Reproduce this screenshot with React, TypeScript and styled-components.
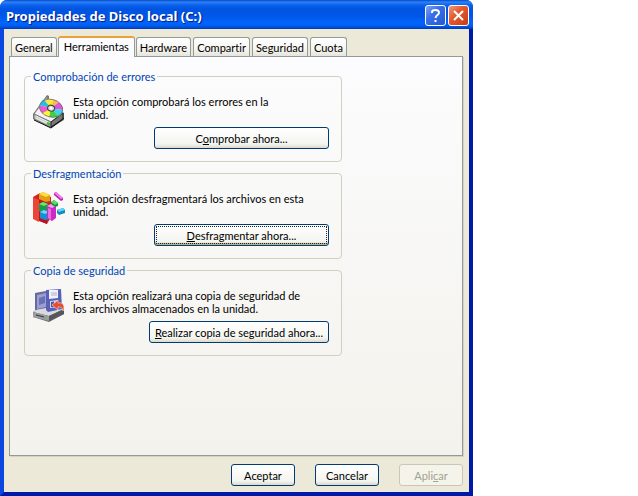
import React from 'react';
import styled, { createGlobalStyle, css } from 'styled-components';

const GlobalStyle = createGlobalStyle`
  * { box-sizing: border-box; }
  body { margin: 0; background: #fff; color: #000; font: 11px/13px Lato, "Liberation Sans", sans-serif; font-variant-ligatures: none; }
  button { font: inherit; font-variant-ligatures: none; color: inherit; white-space: nowrap; }
`;

const Dialog = styled.main`
  display: flex;
  flex-direction: column;
  width: 100%;
  max-width: 473px;
  min-height: 100vh;
  background: #ece9d8;
  border: solid #0831d9;
  border-width: 0 4px 4px;
  border-color: #0831d9 #0019a8 #0019a8 #0a48e0;
  border-radius: 7px 7px 0 0;
`;

const TitleBar = styled.header`
  display: flex;
  align-items: center;
  gap: 2px;
  height: 29px;
  margin: 0 -4px;
  padding: 2px 4px 0 6px;
  border-radius: 7px 7px 0 0;
  background: linear-gradient(#0846c8 0, #2b83f8 2px, #0c62ee 5px, #0054e0 9px, #0056e8 16px, #0066fc 23px, #005cf0 26px, #0038b8 29px);
`;

const Title = styled.h1`
  flex: 1;
  margin: 0;
  color: #fff;
  font: bold 13px/20px "Noto Sans", sans-serif;
  text-shadow: 1px 1px 1px #0a1883;
  white-space: nowrap;
`;

const CaptionButton = styled.button<{ $danger?: boolean }>`
  display: grid;
  place-items: center;
  width: 21px;
  height: 21px;
  padding: 0;
  border: 1px solid #fff;
  border-radius: 3px;
  background: ${p => (p.$danger
    ? 'linear-gradient(135deg, #f0997f, #e35a32 40%, #c83c14)'
    : 'linear-gradient(135deg, #7fa4f5, #3b6fe8 40%, #2258d6)')};
`;

const Body = styled.div`
  display: flex;
  flex: 1;
  flex-direction: column;
  padding: 7px 6px 6px 5px;
`;

const TabList = styled.div`
  display: flex;
  align-items: flex-end;
  gap: 2px;
  height: 21px;
  margin-bottom: -1px;
  padding-left: 2px;
`;

const Tab = styled.button<{ $active?: boolean }>`
  height: 19px;
  padding: 0 3px;
  border: 1px solid #919b9c;
  border-bottom: 0;
  border-radius: 3px 3px 0 0;
  background: linear-gradient(#fff, #f6f5f1 60%, #e6e5dc);
  margin-bottom: 1px;
  ${p => p.$active && css`
    position: relative;
    height: 21px;
    margin: 0 -1px;
    padding: 0 5px 3px;
    border-top: 2px solid #e9a13c;
    background: #fcfcfe;
  `}
`;

const Panel = styled.section`
  display: flex;
  flex: 1;
  flex-direction: column;
  gap: 5px;
  padding: 13px 14px;
  border: 1px solid #919b9c;
  background: linear-gradient(#fcfcfe, #f3f2ec);
  box-shadow: 1px 1px 0 #d6d3c4;
`;

const Group = styled.fieldset`
  display: grid;
  grid-template-columns: 32px 1fr;
  gap: 6px 8px;
  width: 100%;
  max-width: 318px;
  min-width: 0;
  margin: 0;
  padding: 12px 12px 13px 8px;
  border: 1px solid #d0d0bf;
  border-radius: 4px;
`;

const Legend = styled.legend`
  padding: 0 2px;
  margin-left: -2px;
  color: #0046b5;
`;

const IconCell = styled.div`
  grid-row: span 2;
  height: 36px;
  svg { display: block; }
`;

const Description = styled.p`
  margin: 0;
  white-space: pre-line;
`;

const PushButton = styled.button<{ $wide?: boolean; $focused?: boolean }>`
  height: 22px;
  min-width: ${p => (p.$wide ? '175px' : '64px')};
  padding: 0 5px;
  border: 1px solid #003c74;
  border-radius: 3px;
  background: linear-gradient(#fff, #f4f4f0 80%, #dcd8cc);
  &:disabled {
    border-color: #c9c7ba;
    background: #f5f4ea;
    color: #a1a192;
  }
  ${p => p.$focused && css`
    outline: 1px dotted #222;
    outline-offset: -3px;
    box-shadow: inset 0 -2px 0 #b9b586;
  `}
`;

const ButtonSlot = styled.div`
  display: flex;
  justify-content: flex-end;
  height: 21px;
  margin-left: -8px;
`;

const Footer = styled.footer`
  display: flex;
  justify-content: flex-end;
  gap: 20px;
  padding-top: 8px;
`;

const DiskCheckIcon = () => (
  <svg width="32" height="34" viewBox="0 0 32 34" aria-hidden="true">
    <path d="M0 19L14 0l2 1v5l15 12v7L18 33 0 24z" fill="#777" />
    <path d="M1 19L14 2v8l16 8-12 9z" fill="#f3f3f3" stroke="#888" />
    <path d="M1 19l17 8v5L1 24z" fill="#c8c8c8" stroke="#777" />
    <path d="M18 27l12-9v6L18 32z" fill="#777" stroke="#222" />
    <path d="M3 21l12 6M3 23l12 6" stroke="#eee" />
    <path d="M1 25l17 8 13-10" fill="none" stroke="#111" />
    <g transform="translate(-4.600 -2.200) scale(1.180) rotate(14 19 14)">
      <ellipse cx="19" cy="13" rx="10" ry="7.500" fill="#eee" />
      <path d="M19 13H9a10 8 0 0 1 3-6z" fill="#26bde8" />
      <path d="M19 13l-7-5a10 8 0 0 1 7-2.500z" fill="#ffe832" />
      <path d="M19 13V5.500a10 8 0 0 1 5 1z" fill="#f1bd50" />
      <path d="M19 13l5-6.500a10 8 0 0 1 5 5.500z" fill="#e352db" />
      <path d="M19 13l10-1a10 8 0 0 1-2 6z" fill="#37d6ee" />
      <path d="M19 13l8 5a10 8 0 0 1-8 2.500z" fill="#45cf49" />
      <path d="M19 13v7.500a10 8 0 0 1-6-1.500z" fill="#fff32c" />
      <path d="M19 13l-6 6a10 8 0 0 1-4-6z" fill="#ed59cf" />
      <ellipse cx="19" cy="13" rx="10" ry="7.500" fill="none" stroke="#666" strokeWidth=".6" />
      <ellipse cx="19" cy="13" rx="3" ry="2.500" fill="#ddd" stroke="#444" />
      <circle cx="19" cy="13" r="1" fill="#fff" />
    </g>
    <path d="M14 28l3 1.500" stroke="#35bd35" strokeWidth="2" />
  </svg>
);

const DefragIcon = () => (
  <svg width="34" height="34" viewBox="0 0 34 34" aria-hidden="true">
    <path d="M0 5l7-4 11 4v20l-4 7L0 26z" fill="#c92626" />
    <path d="M0 5l6 3v22l-6-3z" fill="#ee4337" />
    <path d="M6 8l8 3v21l-8-3z" fill="#b81424" />
    <path d="M6 2l4-2 7 3v6l-4 1-7-3z" fill="#e79c12" />
    <path d="M6 2l4-2 7 3-4 2z" fill="#ffde45" />
    <path d="M6 12l4-2 5 2v8l-4 2-5-3z" fill="#179b4d" />
    <path d="M6 12l4-2 5 2-4 2z" fill="#78e368" />
    <path d="M7 20l4-2 5 2v7l-4 1-5-2z" fill="#1690d5" />
    <path d="M7 20l4-2 5 2-4 2z" fill="#66d5ff" />
    <path d="M14 14l4-2 5 2v12l-4 3-5-3z" fill="#cc2ac5" />
    <path d="M14 14l4-2 5 2-4 2z" fill="#ff9ef3" />
    <path d="M18 17v11l-3-2V16z" fill="#ed6bdf" />
    <path d="M21 1l2-1 7 6v2l-2 1-7-6z" fill="#b62bae" />
    <path d="M21 1l2-1 7 6-2 1z" fill="#ff79ed" />
    <path d="M18 10l3-2 4 3v3l-3 1-4-3z" fill="#14963b" />
    <path d="M18 10l3-2 4 3-3 2z" fill="#61dc66" />
    <path d="M24 18l6-2 2 2v3l-6 2-2-2z" fill="#1689be" />
    <path d="M24 18l6-2 2 2-6 2z" fill="#5ed8ef" />
  </svg>
);

const BackupIcon = () => (
  <svg width="32" height="34" viewBox="0 0 32 34" aria-hidden="true">
    <path d="M0 23l6-5 25 1v6l-15 8L0 28z" fill="#666" />
    <path d="M0 23l7-5 24 2-15 7z" fill="#d9d9df" />
    <path d="M0 23l16 4v5L0 28z" fill="#999ba1" />
    <path d="M16 27l15-7v5l-15 7z" fill="#55575c" />
    <path d="M2 4l11-2v17L2 21z" fill="#666a98" />
    <path d="M4 6l9-2v14l-9 2z" fill="#9a9ed0" />
    <path d="M6 9l6-2v7l-6 2z" fill="#6a70b4" />
    <path d="M13 1l15-1 1 20-14 3-2-2z" fill="#5960b7" />
    <path d="M16 1h9v8l-9 1z" fill="#f2f2ff" />
    <path d="M17 12l8-1v7l-8 1z" fill="#ced2eb" />
    <path d="M18 13l3-.5V18h-3z" fill="#4f579b" />
    <path d="M18 4h6M18 6h6" stroke="#aaaed6" />
    <path d="M19 16l6-5v3c6-1 7 4 5 8-1-4-2-4-5-4v3z" fill="#e94a27" stroke="#fff" strokeWidth=".5" />
    <path d="M3 26l8 2" stroke="#333" />
    <path d="M13 29h2" stroke="#6fc96c" />
  </svg>
);

const tabs = ['General', 'Herramientas', 'Hardware', 'Compartir', 'Seguridad', 'Cuota'];

interface ToolProps {
  title: string;
  icon: React.ReactNode;
  text: string;
  focused?: boolean;
  children: React.ReactNode;
}

const Tool = ({ title, icon, text, focused, children }: ToolProps) => (
  <Group>
    <Legend>{title}</Legend>
    <IconCell>{icon}</IconCell>
    <Description>{text}</Description>
    <ButtonSlot>
      <PushButton type="button" $wide $focused={focused}>{children}</PushButton>
    </ButtonSlot>
  </Group>
);

export default function App() {
  return (
    <>
      <GlobalStyle />
      <Dialog aria-labelledby="dialog-title">
        <TitleBar>
          <Title id="dialog-title">Propiedades de Disco local (C:)</Title>
          <CaptionButton type="button" aria-label="Ayuda">
            <svg width="13" height="15" viewBox="0 0 13 15" fill="none" stroke="#fff" strokeWidth="2">
              <path d="M3 5V4q0-2 3.500-2T10 4.500Q10 6 8.500 7T6.500 10M6.500 12v2" />
            </svg>
          </CaptionButton>
          <CaptionButton type="button" aria-label="Cerrar" $danger>
            <svg width="13" height="13" viewBox="0 0 13 13" stroke="#fff" strokeWidth="2">
              <path d="M2 2l9 9M11 2l-9 9" />
            </svg>
          </CaptionButton>
        </TitleBar>
        <Body>
          <TabList role="tablist">
            {tabs.map(name => (
              <Tab key={name} type="button" role="tab" aria-selected={name === 'Herramientas'} $active={name === 'Herramientas'}>
                {name}
              </Tab>
            ))}
          </TabList>
          <Panel role="tabpanel" aria-label="Herramientas">
            <Tool title="Comprobación de errores" icon={<DiskCheckIcon />} text={'Esta opción comprobará los errores en la\nunidad.'}>
              C<u>o</u>mprobar ahora...
            </Tool>
            <Tool title="Desfragmentación" icon={<DefragIcon />} focused text={'Esta opción desfragmentará los archivos en esta\nunidad.'}>
              <u>D</u>esfragmentar ahora...
            </Tool>
            <Tool title="Copia de seguridad" icon={<BackupIcon />} text={'Esta opción realizará una copia de seguridad de\nlos archivos almacenados en la unidad.'}>
              <u>R</u>ealizar copia de seguridad ahora...
            </Tool>
          </Panel>
          <Footer>
            <PushButton type="button">Aceptar</PushButton>
            <PushButton type="button">Cancelar</PushButton>
            <PushButton type="button" disabled>Apli<u>c</u>ar</PushButton>
          </Footer>
        </Body>
      </Dialog>
    </>
  );
}
